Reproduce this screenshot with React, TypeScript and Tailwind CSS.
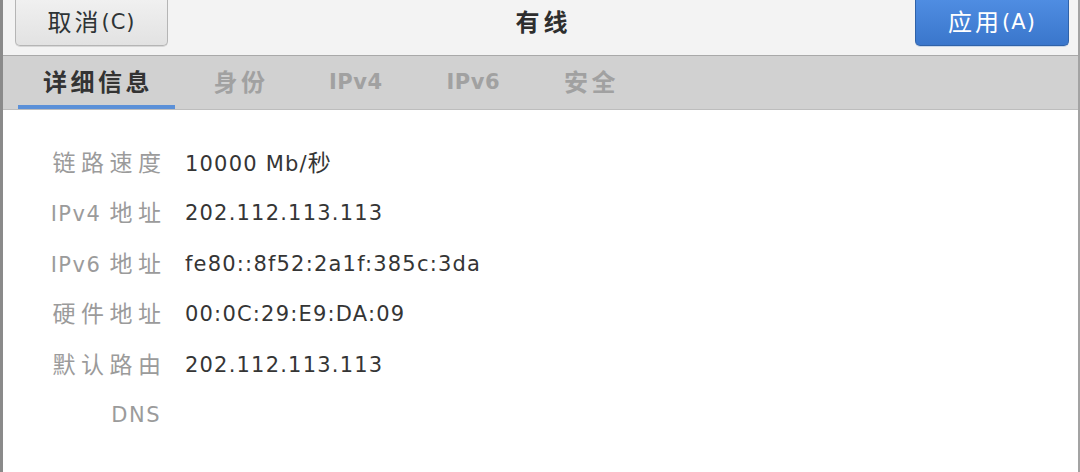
import React from 'react';

const FONT = "font-['DejaVu_Sans','Noto_Sans_CJK_SC',sans-serif]";
const CJK_RE = /[\u3000-\u9fff\uff00-\uffef]/;

// The capture is wide-set: CJK glyphs get extra tracking, Latin a touch.
function Spaced({ text, cjk, latin }: { text: string; cjk: string; latin: string }) {
  const runs = text.match(/[\u3000-\u9fff\uff00-\uffef]+|[^\u3000-\u9fff\uff00-\uffef]+/g) ?? [];
  return (
    <>
      {runs.map((run, i) => {
        const isCjk = CJK_RE.test(run);
        const last = i === runs.length - 1;
        if (isCjk && last && run.length > 0) {
          return (
            <span key={i} className={cjk}>
              {run.slice(0, -1)}
              <span className="tracking-normal">{run.slice(-1)}</span>
            </span>
          );
        }
        return (
          <span key={i} className={isCjk ? cjk : latin}>
            {run}
          </span>
        );
      })}
    </>
  );
}

const tabs = ['详细信息', '身份', 'IPv4', 'IPv6', '安全'];

const details = [
  { label: '链路速度', value: '10000 Mb/秒' },
  { label: 'IPv4 地址', value: '202.112.113.113' },
  { label: 'IPv6 地址', value: 'fe80::8f52:2a1f:385c:3da' },
  { label: '硬件地址', value: '00:0C:29:E9:DA:09' },
  { label: '默认路由', value: '202.112.113.113' },
  { label: 'DNS', value: '' },
];

export default function App() {
  return (
    <div
      className={`${FONT} h-[472px] w-[1080px] overflow-hidden bg-white border-l-[3px] border-l-[#8a8a8a] border-r-2 border-r-[#a3a3a3] flex flex-col`}
    >
      {/* Header bar */}
      <div className="h-[56px] shrink-0 bg-[#f3f3f3] border-b border-[#a9a9a9] flex items-start pl-[12px] pr-[9px]">
        <button className="h-[46px] w-[153px] rounded-b-[5px] border border-t-0 border-[#b5b5b5] bg-gradient-to-b from-[#f0f0f0] to-[#e2e2e2] shadow-[0_1px_0_#d8d8d8] flex items-center justify-center text-[#2e3436]">
          <Spaced text="取消(C)" cjk="text-[24px] tracking-[3px]" latin="text-[21px] tracking-[1px]" />
        </button>
        <div className="flex-1 h-[46px] flex items-center justify-center text-[#2e2e2e] font-bold">
          <Spaced text="有线" cjk="text-[24px] tracking-[4px]" latin="text-[21px]" />
        </div>
        <button className="h-[46px] w-[154px] rounded-b-[5px] border border-t-0 border-[#2f62a8] bg-gradient-to-b from-[#4f8de2] to-[#3a76cb] shadow-[0_1px_0_#c9d6e8] flex items-center justify-center text-white">
          <Spaced text="应用(A)" cjk="text-[24px] tracking-[3px]" latin="text-[21px] tracking-[1px]" />
        </button>
      </div>

      {/* Tab bar */}
      <div className="h-[54px] shrink-0 bg-[#d1d1d1] border-b border-[#bdbdbd] flex items-stretch pl-[8px]">
        {tabs.map((tab, i) => {
          const active = i === 0;
          return (
            <div
              key={tab}
              className={`relative mx-[7px] px-[25px] flex items-center font-bold ${
                active ? 'text-[#333333]' : 'text-[#a1a1a1]'
              }`}
            >
              <Spaced text={tab} cjk="text-[24px] tracking-[3.5px]" latin="text-[21px] tracking-[0.5px]" />
              {active && (
                <div className="absolute left-0 right-0 bottom-0 h-[4px] bg-[#5b90d8]" />
              )}
            </div>
          );
        })}
      </div>

      {/* Details */}
      <div className="flex-1 pt-[38px] flex flex-col gap-[20.5px]">
        {details.map((row) => (
          <div key={row.label} className="h-[30px] flex items-center">
            <div className="w-[158px] text-right text-[#9b9b9b] leading-none">
              <Spaced text={row.label} cjk="text-[23px] tracking-[5.5px]" latin="text-[21px] tracking-[1.5px]" />
            </div>
            <div className="ml-[24px] text-[#353535] leading-none">
              <Spaced text={row.value} cjk="text-[23px]" latin="text-[21px] tracking-[1.2px]" />
            </div>
          </div>
        ))}
      </div>
    </div>
  );
}
